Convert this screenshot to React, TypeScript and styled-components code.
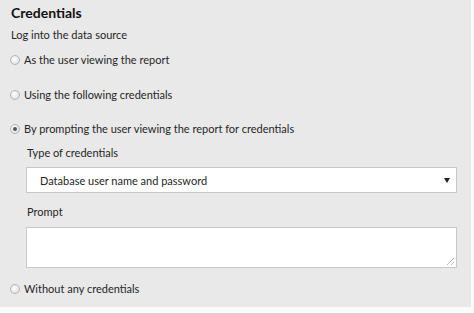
import styled, { createGlobalStyle } from "styled-components";

const GlobalStyle = createGlobalStyle`
  html, body {
    margin: 0;
    padding: 0;
    background: #fbfbfb;
  }
  body {
    font-family: "Segoe UI", Lato, "Open Sans", sans-serif;
    color: #262626;
  }
`;

const Panel = styled.div`
  width: 471px;
  height: 307px;
  box-sizing: border-box;
  background: #e9e9e9;
  padding: 3px 14px 0 10px;
  display: flex;
  flex-direction: column;
`;

const Heading = styled.h2`
  margin: 0;
  font-size: 14px;
  font-weight: 700;
  line-height: 20px;
  padding-left: 1px;
  color: #111;
`;

const Label = styled.div<{ $top: number; $indent?: boolean }>`
  margin-top: ${(p) => p.$top}px;
  padding-left: ${(p) => (p.$indent ? 17 : 1)}px;
  font-size: 11px;
  line-height: 20px;
`;

const Option = styled.label<{ $top: number }>`
  margin-top: ${(p) => p.$top}px;
  display: flex;
  align-items: center;
  gap: 4px;
  font-size: 11px;
  line-height: 20px;
  cursor: pointer;
`;

const Radio = styled.span<{ $checked?: boolean }>`
  width: 10px;
  height: 10px;
  border-radius: 50%;
  box-sizing: border-box;
  border: 1px solid #b4b4b4;
  background: radial-gradient(circle at 40% 40%, #ffffff, #d8d8d8);
  display: inline-flex;
  align-items: center;
  justify-content: center;
  flex: none;

  &::after {
    content: "";
    width: 4px;
    height: 4px;
    border-radius: 50%;
    background: ${(p) => (p.$checked ? "#555" : "transparent")};
  }
`;

const Field = styled.div<{ $top: number; $height: number }>`
  margin-top: ${(p) => p.$top}px;
  margin-left: 16px;
  height: ${(p) => p.$height}px;
  box-sizing: border-box;
  background: #fff;
  border: 1px solid #c8c8c8;
  position: relative;
  display: flex;
  align-items: center;
`;

const SelectText = styled.span`
  padding-left: 13px;
  font-size: 11px;
  flex: 1;
`;

const Caret = styled.span`
  width: 0;
  height: 0;
  margin-right: 6px;
  border-left: 3px solid transparent;
  border-right: 3px solid transparent;
  border-top: 5px solid #222;
`;

const Grip = styled.svg`
  position: absolute;
  right: 1px;
  bottom: 1px;
`;

export default function App() {
  return (
    <>
      <GlobalStyle />
      <Panel>
        <Heading>Credentials</Heading>
        <Label $top={2}>Log into the data source</Label>
        <Option $top={5}>
          <Radio />
          As the user viewing the report
        </Option>
        <Option $top={15}>
          <Radio />
          Using the following credentials
        </Option>
        <Option $top={14}>
          <Radio $checked />
          By prompting the user viewing the report for credentials
        </Option>
        <Label $top={4} $indent>
          Type of credentials
        </Label>
        <Field $top={4} $height={26}>
          <SelectText>Database user name and password</SelectText>
          <Caret />
        </Field>
        <Label $top={9} $indent>
          Prompt
        </Label>
        <Field $top={5} $height={41}>
          <Grip width="10" height="10" viewBox="0 0 10 10">
            <path d="M9 2 L2 9 M9 6 L6 9" stroke="#bbb" strokeWidth="1" />
          </Grip>
        </Field>
        <Option $top={11}>
          <Radio />
          Without any credentials
        </Option>
      </Panel>
    </>
  );
}
